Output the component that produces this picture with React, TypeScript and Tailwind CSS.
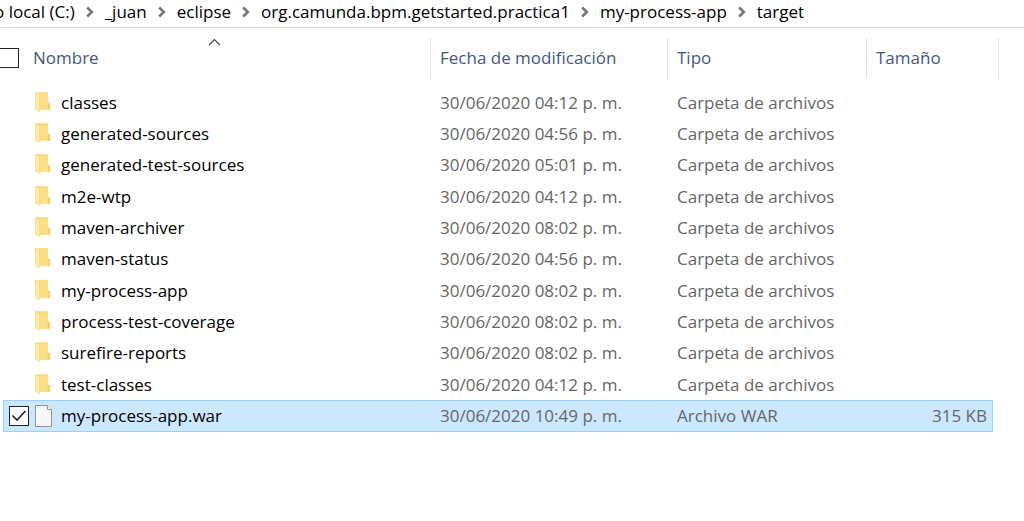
import { Fragment } from 'react';

const path = ['o local (C:)', '_juan', 'eclipse', 'org.camunda.bpm.getstarted.practica1', 'my-process-app', 'target'];

const files = [
  { name: 'classes', date: '30/06/2020 04:12 p. m.' },
  { name: 'generated-sources', date: '30/06/2020 04:56 p. m.' },
  { name: 'generated-test-sources', date: '30/06/2020 05:01 p. m.' },
  { name: 'm2e-wtp', date: '30/06/2020 04:12 p. m.' },
  { name: 'maven-archiver', date: '30/06/2020 08:02 p. m.' },
  { name: 'maven-status', date: '30/06/2020 04:56 p. m.' },
  { name: 'my-process-app', date: '30/06/2020 08:02 p. m.' },
  { name: 'process-test-coverage', date: '30/06/2020 08:02 p. m.' },
  { name: 'surefire-reports', date: '30/06/2020 08:02 p. m.' },
  { name: 'test-classes', date: '30/06/2020 04:12 p. m.' },
];

const checkbox = 'size-5 shrink-0 appearance-none border border-[#222] bg-white';

function Chevron() {
  return (
    <svg className="mx-[11px] h-3 w-2 shrink-0" viewBox="0 0 8 12" fill="none" stroke="#777" strokeWidth="2.6" aria-hidden="true">
      <path d="M1.2 1.5 5.8 6 1.2 10.5" />
    </svg>
  );
}

function FolderIcon() {
  return (
    <svg className="mb-0.5 h-5 w-4 shrink-0" viewBox="0 0 16 20" aria-hidden="true">
      <path d="M.5.2h12q.6 0 .6.6v9.9l2 .8v6.3H4L.5 16z" fill="#f8d775" />
      <path d="M5 2.8 13.1.6v10.1l-2 6.8H5z" fill="#fbdf87" />
      <path d="M13.1 10.7 15.1 11.5v6.3h-2z" fill="#f5cf67" />
      <path d="M.5.2 4.6 2.8v17L.5 17.6z" fill="#ffeaa8" stroke="#f3d583" strokeWidth=".6" />
    </svg>
  );
}

function FileIcon() {
  return (
    <svg className="h-[22px] w-[17px] shrink-0" viewBox="0 0 17 22" aria-hidden="true">
      <path d="M.5.5h12l4 4v17H.5z" fill="#f7f7f7" stroke="#949494" />
      <path d="M12.5.5v4h4" fill="#fff" stroke="#949494" />
    </svg>
  );
}

export default function App() {
  return (
    <main className="min-h-screen overflow-hidden bg-white font-['Open_Sans','Noto_Sans',sans-serif] text-[17px] leading-6 whitespace-nowrap text-black">
      <nav aria-label="Ruta" className="-ml-1.5 flex h-7 items-center border-b border-[#d9d9d9] pb-1">
        {path.map((part, i) => (
          <Fragment key={part}>
            {i > 0 && <Chevron />}
            <a href="#">{part}</a>
          </Fragment>
        ))}
      </nav>

      <table className="ml-[3px] w-[996px] table-fixed border-separate border-spacing-0 text-left">
        <colgroup>
          <col className="w-[428px]" />
          <col className="w-[237px]" />
          <col className="w-[199px]" />
          <col className="w-[126px]" />
          <col className="w-[6px]" />
        </colgroup>
        <thead className="text-[#44597a]">
          <tr className="h-[59px]">
            <th className="p-0 font-normal">
              <div className="relative flex h-10 items-center border-r border-[#e2e2e2]">
                <input type="checkbox" aria-label="Seleccionar todo" className={`${checkbox} -ml-1`} />
                <button className="ml-3.5">Nombre</button>
                <svg className="absolute top-0 left-[205px] h-2 w-3" viewBox="0 0 12 8" fill="none" stroke="#444" strokeWidth="1.2" aria-hidden="true">
                  <path d="M1 7 6.5 1.5 12 7" />
                </svg>
              </div>
            </th>
            <th className="p-0 font-normal">
              <div className="flex h-10 items-center border-r border-[#e2e2e2] pl-[9px]">
                <button>Fecha de modificación</button>
              </div>
            </th>
            <th className="p-0 font-normal">
              <div className="flex h-10 items-center border-r border-[#e2e2e2] pl-[9px]">
                <button>Tipo</button>
              </div>
            </th>
            <th className="p-0 font-normal">
              <div className="flex h-10 items-center pl-[9px]">
                <button>Tamaño</button>
              </div>
            </th>
            <td className="p-0">
              <div className="h-10 border-r border-[#e2e2e2]" />
            </td>
          </tr>
        </thead>
        <tbody className="text-[#666]">
          {files.map((file) => (
            <tr key={file.name} className="h-[31px] nth-[3n]:h-8">
              <td className="p-0 text-black">
                <div className="flex items-center pl-8">
                  <FolderIcon />
                  <span className="ml-[10px]">{file.name}</span>
                </div>
              </td>
              <td className="p-0 pl-[9px]">{file.date}</td>
              <td className="p-0 pl-[9px]">Carpeta de archivos</td>
              <td />
              <td />
            </tr>
          ))}
          <tr className="h-8">
            <td className="border-y border-l border-[#99d1ff] bg-[#cce8ff] p-0 text-black">
              <div className="flex items-center pl-[5px]">
                <span className="relative flex">
                  <input type="checkbox" defaultChecked aria-label="my-process-app.war" className={checkbox} />
                  <svg className="pointer-events-none absolute inset-0 size-5" viewBox="0 0 20 20" fill="none" stroke="#222" strokeWidth="1.6" aria-hidden="true">
                    <path d="M3.5 9.5 8 14 16.5 5" />
                  </svg>
                </span>
                <span className="ml-[6px] flex"><FileIcon /></span>
                <span className="ml-[9px]">my-process-app.war</span>
              </div>
            </td>
            <td className="border-y border-[#99d1ff] bg-[#cce8ff] p-0 pl-[9px]">30/06/2020 10:49 p. m.</td>
            <td className="border-y border-[#99d1ff] bg-[#cce8ff] p-0 pl-[9px]">Archivo WAR</td>
            <td className="border-y border-r border-[#99d1ff] bg-[#cce8ff] p-0 pr-[5px] text-right">315 KB</td>
            <td />
          </tr>
        </tbody>
      </table>
    </main>
  );
}
